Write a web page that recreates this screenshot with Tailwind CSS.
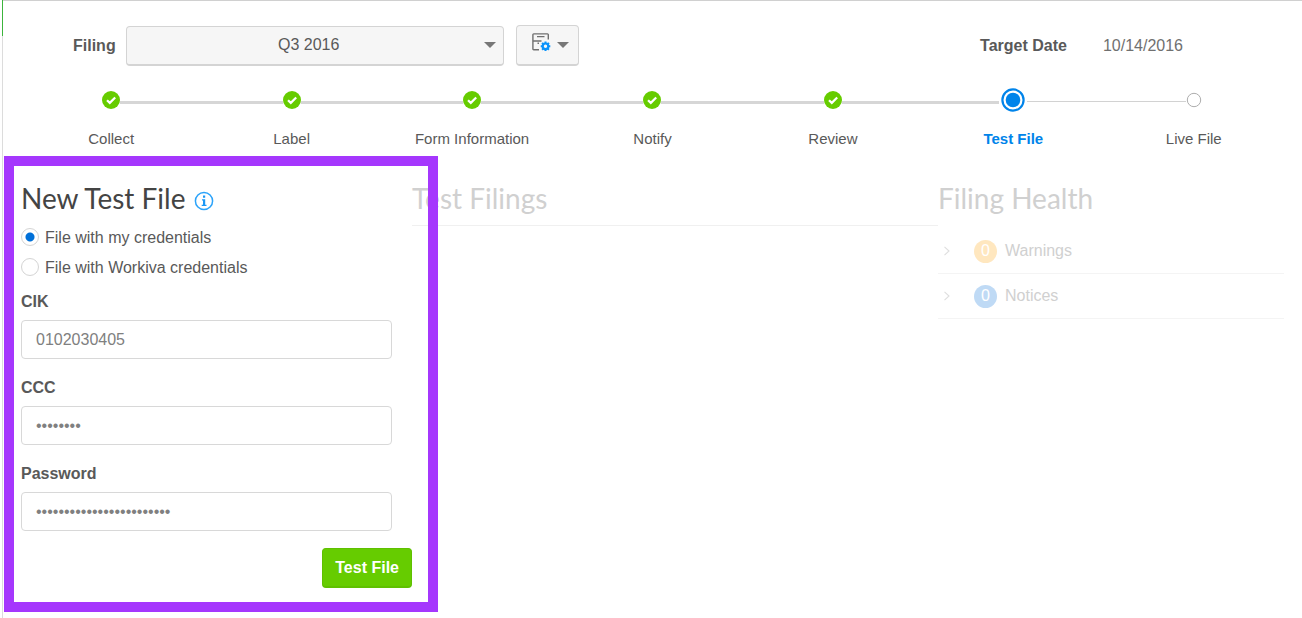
<!DOCTYPE html>
<html lang="en">
<head>
    <meta charset="UTF-8">
    <meta name="viewport" content="width=device-width, initial-scale=1.0">
    <title>Filing Q3 2016 | Test File</title>
    <script src="https://cdn.jsdelivr.net/npm/@tailwindcss/browser@4"></script>
</head>
<body class="bg-white font-['Liberation_Sans',Arial,sans-serif] text-base text-[#595959]">
    <div class="relative ml-[2px] min-h-screen border-t border-l border-t-[#d0d0d0] border-l-[#dcdcdc] pl-[18px] pr-[18px]">
        <span class="absolute -left-px -top-px h-9 w-px bg-[#3cb43c]"></span>

        <!-- Filing bar -->
        <header class="flex items-center pt-6">
            <label for="filing" class="ml-[52px] mr-[10px] font-bold">Filing</label>
            <div class="relative w-[378px]">
                <select id="filing" class="h-10 w-full appearance-none rounded border border-b-2 border-[#d4d4d4] bg-[#f6f6f6] pr-3 text-center">
                    <option>Q3 2016</option>
                </select>
                <svg class="pointer-events-none absolute right-2 top-4" width="12" height="6" viewBox="0 0 12 6" fill="#777"><path d="M0 0h12L6 6z"/></svg>
            </div>
            <button type="button" aria-label="Filing settings" class="ml-3 flex h-[41px] w-[63px] items-center justify-center gap-[6px] rounded border border-b-2 border-[#d4d4d4] bg-[#f6f6f6] pl-[6px]">
                <svg class="mb-[6px]" width="19" height="19" viewBox="0 0 19 19" fill="none">
                    <path d="M16.300 6.500V1.700a.8.8 0 0 0-.8-.8H1.700a.8.8 0 0 0-.8.8v14.200a.8.8 0 0 0 .8.8H7M1 8h8.500M5 3.600h7.500M5.500 10.300h1.500" stroke="#707070" stroke-width="1.400"/>
                    <circle cx="13.500" cy="13.300" r="2.800" stroke="#0b93fb" stroke-width="2.200"/>
                    <path d="M13.500 8.500v1.800M13.500 16.300v1.800M8.700 13.300h1.800M16.500 13.300h1.800M10.100 9.900l1.300 1.300M15.600 15.400l1.300 1.300M10.100 16.700l1.300-1.300M15.600 11.200l1.300-1.300" stroke="#0b93fb" stroke-width="2"/>
                </svg>
                <svg width="12" height="6" viewBox="0 0 12 6" fill="#777"><path d="M0 0h12L6 6z"/></svg>
            </button>
            <dl class="ml-auto mr-[101px] flex gap-9">
                <dt class="font-bold">Target Date</dt>
                <dd class="text-[#707070]">10/14/2016</dd>
            </dl>
        </header>

        <!-- Progress -->
        <ol class="mt-[22px] flex text-center text-[15px] leading-5">
            <li class="flex-1">
                <div class="flex h-6 items-center">
                    <span class="flex-1"></span>
                    <svg width="18" height="18" viewBox="0 0 18 18"><circle cx="9" cy="9" r="9" fill="#6c0"/><path d="M5 9.200l2.800 2.700L13.200 6.500" fill="none" stroke="#fff" stroke-width="2.200"/></svg>
                    <span class="mt-1 h-[3px] flex-1 bg-[#d6d6d6]"></span>
                </div>
                <p class="mt-[17px]">Collect</p>
            </li>
            <li class="flex-1">
                <div class="flex h-6 items-center">
                    <span class="mt-1 h-[3px] flex-1 bg-[#d6d6d6]"></span>
                    <svg width="18" height="18" viewBox="0 0 18 18"><circle cx="9" cy="9" r="9" fill="#6c0"/><path d="M5 9.200l2.800 2.700L13.200 6.500" fill="none" stroke="#fff" stroke-width="2.200"/></svg>
                    <span class="mt-1 h-[3px] flex-1 bg-[#d6d6d6]"></span>
                </div>
                <p class="mt-[17px]">Label</p>
            </li>
            <li class="flex-1">
                <div class="flex h-6 items-center">
                    <span class="mt-1 h-[3px] flex-1 bg-[#d6d6d6]"></span>
                    <svg width="18" height="18" viewBox="0 0 18 18"><circle cx="9" cy="9" r="9" fill="#6c0"/><path d="M5 9.200l2.800 2.700L13.200 6.500" fill="none" stroke="#fff" stroke-width="2.200"/></svg>
                    <span class="mt-1 h-[3px] flex-1 bg-[#d6d6d6]"></span>
                </div>
                <p class="mt-[17px]">Form Information</p>
            </li>
            <li class="flex-1">
                <div class="flex h-6 items-center">
                    <span class="mt-1 h-[3px] flex-1 bg-[#d6d6d6]"></span>
                    <svg width="18" height="18" viewBox="0 0 18 18"><circle cx="9" cy="9" r="9" fill="#6c0"/><path d="M5 9.200l2.800 2.700L13.200 6.500" fill="none" stroke="#fff" stroke-width="2.200"/></svg>
                    <span class="mt-1 h-[3px] flex-1 bg-[#d6d6d6]"></span>
                </div>
                <p class="mt-[17px]">Notify</p>
            </li>
            <li class="flex-1">
                <div class="flex h-6 items-center">
                    <span class="mt-1 h-[3px] flex-1 bg-[#d6d6d6]"></span>
                    <svg width="18" height="18" viewBox="0 0 18 18"><circle cx="9" cy="9" r="9" fill="#6c0"/><path d="M5 9.200l2.800 2.700L13.200 6.500" fill="none" stroke="#fff" stroke-width="2.200"/></svg>
                    <span class="mt-1 h-[3px] flex-1 bg-[#d6d6d6]"></span>
                </div>
                <p class="mt-[17px]">Review</p>
            </li>
            <li class="flex-1" aria-current="step">
                <div class="flex h-6 items-center gap-[2px]">
                    <span class="mt-1 h-[3px] flex-1 bg-[#d6d6d6]"></span>
                    <svg width="24" height="24" viewBox="0 0 24 24"><circle cx="12" cy="12" r="10.600" fill="#fff" stroke="#0084ea" stroke-width="2.200"/><circle cx="12" cy="12" r="7.300" fill="#0084ea"/></svg>
                    <span class="mt-[2px] h-px flex-1 bg-[#d2d2d2]"></span>
                </div>
                <p class="mt-[17px] font-bold text-[#0084ea]">Test File</p>
            </li>
            <li class="flex-1">
                <div class="flex h-6 items-center">
                    <span class="mt-[2px] h-px flex-1 bg-[#d2d2d2]"></span>
                    <svg width="16" height="16" viewBox="0 0 16 16"><circle cx="8" cy="8" r="6.700" fill="#fff" stroke="#adadad"/></svg>
                    <span class="flex-1"></span>
                </div>
                <p class="mt-[17px]">Live File</p>
            </li>
        </ol>

        <main class="flex pt-[31px]">
            <!-- New test file -->
            <form class="relative w-[391px] shrink-0">
                <div class="pointer-events-none absolute -left-[17px] -top-6 -right-[26px] -bottom-6 z-10 border-[10px] border-[#a537fd]"></div>
                <h2 class="flex items-center gap-[9px] font-[Lato,sans-serif] text-[28px] leading-9 text-[#444]">
                    New Test File
                    <svg class="mt-[6px]" width="20" height="20" viewBox="0 0 20 20"><circle cx="10" cy="10" r="8.600" fill="none" stroke="#2ba3fa" stroke-width="1.500"/><path d="M8 8.200h3.200v5.500h1.300v1.200H7.700v-1.200H9V9.400H8zM9 4.600h2.200v2.200H9z" fill="#1a97f5"/></svg>
                </h2>
                <div class="mt-[6px] flex h-[30px] items-center gap-[6px]">
                    <input type="radio" id="mine" name="credentials" checked class="size-[18px] appearance-none rounded-full border border-[#d4d4d4] bg-white checked:bg-[radial-gradient(circle,#0070d8_0_4px,#fff_5px)]">
                    <label for="mine" class="pt-[2px]">File with my credentials</label>
                </div>
                <div class="flex h-[30px] items-center gap-[6px]">
                    <input type="radio" id="workiva" name="credentials" class="size-[18px] appearance-none rounded-full border border-[#d4d4d4] bg-white checked:bg-[radial-gradient(circle,#0070d8_0_4px,#fff_5px)]">
                    <label for="workiva" class="pt-[2px]">File with Workiva credentials</label>
                </div>
                <div class="mt-2 flex flex-col gap-[17px] pr-5">
                    <div>
                        <label for="cik" class="block font-bold">CIK</label>
                        <input type="text" id="cik" value="0102030405" class="mt-[6px] h-[39px] w-full rounded border border-[#d8d8d8] px-[14px] text-[#808080]">
                    </div>
                    <div>
                        <label for="ccc" class="block font-bold">CCC</label>
                        <input type="password" id="ccc" value="abcdefgh" class="mt-[6px] h-[39px] w-full rounded border border-[#d8d8d8] px-[14px] text-[#808080]">
                    </div>
                    <div>
                        <label for="password" class="block font-bold">Password</label>
                        <input type="password" id="password" value="abcdefghijklmnopqrstuvwx" class="mt-[6px] h-[39px] w-full rounded border border-[#d8d8d8] px-[14px] text-[#808080]">
                    </div>
                </div>
                <div class="mt-[17px] flex justify-end">
                    <button type="submit" class="h-10 rounded border border-b-2 border-[#5fc000] bg-[#6c0] px-3 font-bold text-white">Test File</button>
                </div>
            </form>

            <!-- Test filings -->
            <section class="flex-1">
                <h2 class="border-b border-[#f0f0f0] pb-[9px] font-[Lato,sans-serif] text-[28px] leading-9 text-[#d0d0d0]">Test Filings</h2>
            </section>

            <!-- Filing health -->
            <section class="w-[346px] shrink-0 text-[#d0d0d0]">
                <h2 class="pb-[13px] font-[Lato,sans-serif] text-[28px] leading-9">Filing Health</h2>
                <ul>
                    <li class="flex h-[45px] items-center border-b border-[#f4f4f4]">
                        <svg class="ml-1" width="8" height="10" viewBox="0 0 8 10" fill="none" stroke="#dedede" stroke-width="1.100"><path d="M2.500.8L7 5 2.500 9.200"/></svg>
                        <span class="ml-6 mr-2 flex size-[23px] items-center justify-center rounded-full bg-[#ffe7bf] text-white">0</span>
                        Warnings
                    </li>
                    <li class="flex h-[45px] items-center border-b border-[#f4f4f4]">
                        <svg class="ml-1" width="8" height="10" viewBox="0 0 8 10" fill="none" stroke="#dedede" stroke-width="1.100"><path d="M2.500.8L7 5 2.500 9.200"/></svg>
                        <span class="ml-6 mr-2 flex size-[23px] items-center justify-center rounded-full bg-[#bfdaf5] text-white">0</span>
                        Notices
                    </li>
                </ul>
            </section>
        </main>
    </div>
</body>
</html>
